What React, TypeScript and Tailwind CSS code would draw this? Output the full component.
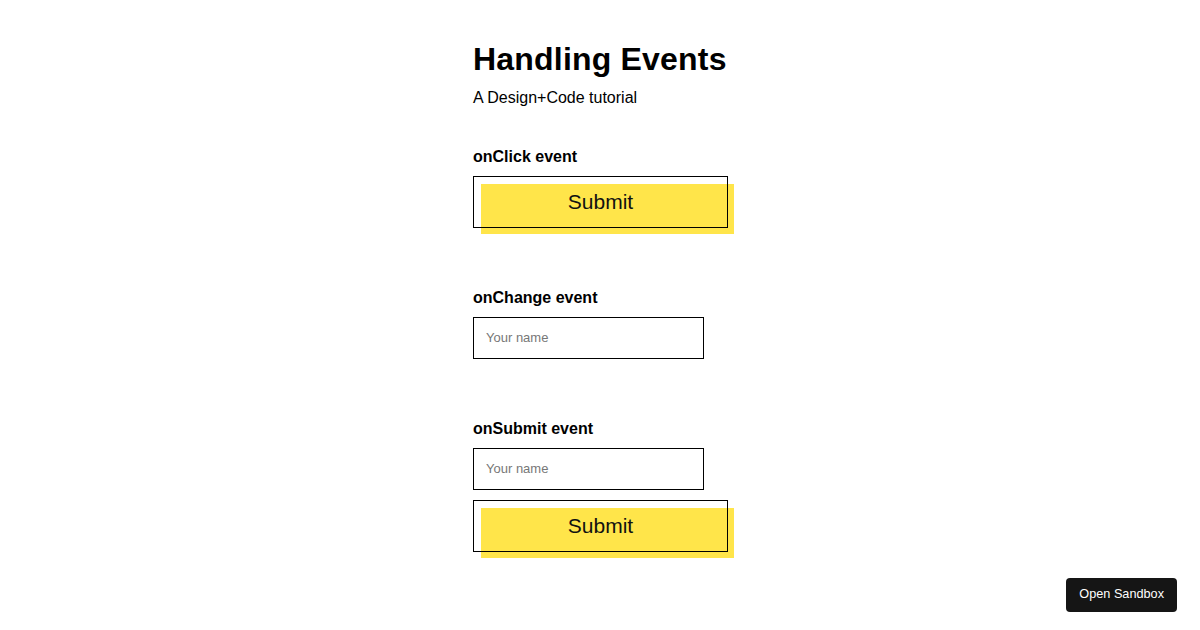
import { useState } from 'react';

function OffsetButton({ onClick }: { onClick?: () => void }) {
    return (
        <button
            type="submit"
            onClick={onClick}
            className="relative block w-[255px] h-[52px] pb-[2px] border border-black bg-transparent text-[21px] leading-none text-[#111] cursor-pointer"
        >
            {/* yellow block sitting behind the outline */}
            <span className="absolute left-[7px] top-[7px] w-[253px] h-[50px] bg-[#ffe54a] -z-10" />
            <span className="relative">Submit</span>
        </button>
    );
}

export default function App() {
    const [name, setName] = useState("");
    const [clicks, setClicks] = useState(0);

    return (
        <div
            className="relative isolate min-h-screen bg-white text-black"
            style={{ fontFamily: '"Liberation Sans", Arial, sans-serif' }}
        >
            <div className="w-[254px] mx-auto pt-[41px] flex flex-col">
                <h1 className="text-[32px] leading-[37px] font-bold tracking-[0.2px] whitespace-nowrap">Handling Events</h1>
                <p className="mt-[11px] text-[16px] leading-[18px]">A Design+Code tutorial</p>

                <h3 className="mt-[41px] text-[16px] leading-[18px] font-bold">onClick event</h3>
                <div className="mt-[10px]">
                    <OffsetButton onClick={() => setClicks(clicks + 1)} />
                </div>

                <h3 className="mt-[61px] text-[16px] leading-[18px] font-bold">onChange event</h3>
                <input
                    value={name}
                    onChange={(e) => setName(e.target.value)}
                    placeholder="Your name"
                    className="mt-[10px] w-[231px] h-[42px] border border-black pl-[12px] pr-[12px] pb-[2px] text-[13px] outline-none placeholder:text-[#777]"
                />

                <h3 className="mt-[61px] text-[16px] leading-[18px] font-bold">onSubmit event</h3>
                <form className="flex flex-col" onSubmit={(e) => e.preventDefault()}>
                    <input
                        placeholder="Your name"
                        className="mt-[10px] w-[231px] h-[42px] border border-black pl-[12px] pr-[12px] pb-[2px] text-[13px] outline-none placeholder:text-[#777]"
                    />
                    <div className="mt-[10px]">
                        <OffsetButton />
                    </div>
                </form>
            </div>

            <button className="fixed right-[23px] bottom-[18px] h-[34px] px-[13px] rounded-[4px] bg-[#151515] text-white text-[12.7px]">
                Open Sandbox
            </button>
        </div>
    );
}
